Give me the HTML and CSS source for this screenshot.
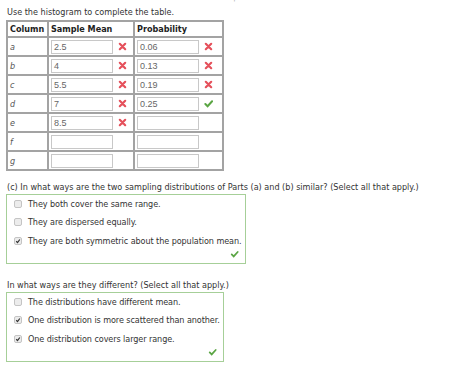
FILE: index.html
```html
<!DOCTYPE html>
<html>
  <head>
    <meta charset="UTF-8" />
    <title>Sampling distributions</title>
    <link rel="stylesheet" href="styles.css">
  </head>
  <body>
    <div class="cut"><span>Sample Mean</span></div>

    <p class="prompt">Use the histogram to complete the table.</p>
    <table class="grid">
      <tr>
        <th class="c1">Column</th>
        <th class="c2">Sample Mean</th>
        <th class="c3">Probability</th>
      </tr>
      <tr>
        <td class="letter">a</td>
        <td><span class="box">2.5</span><span class="mark bad"><svg viewBox="0 0 10 10"><path d="M2 2 L8 8 M8 2 L2 8"/></svg></span></td>
        <td><span class="box">0.06</span><span class="mark bad"><svg viewBox="0 0 10 10"><path d="M2 2 L8 8 M8 2 L2 8"/></svg></span></td>
      </tr>
      <tr>
        <td class="letter">b</td>
        <td><span class="box">4</span><span class="mark bad"><svg viewBox="0 0 10 10"><path d="M2 2 L8 8 M8 2 L2 8"/></svg></span></td>
        <td><span class="box">0.13</span><span class="mark bad"><svg viewBox="0 0 10 10"><path d="M2 2 L8 8 M8 2 L2 8"/></svg></span></td>
      </tr>
      <tr>
        <td class="letter">c</td>
        <td><span class="box">5.5</span><span class="mark bad"><svg viewBox="0 0 10 10"><path d="M2 2 L8 8 M8 2 L2 8"/></svg></span></td>
        <td><span class="box">0.19</span><span class="mark bad"><svg viewBox="0 0 10 10"><path d="M2 2 L8 8 M8 2 L2 8"/></svg></span></td>
      </tr>
      <tr>
        <td class="letter">d</td>
        <td><span class="box">7</span><span class="mark bad"><svg viewBox="0 0 10 10"><path d="M2 2 L8 8 M8 2 L2 8"/></svg></span></td>
        <td><span class="box">0.25</span><span class="mark good"><svg viewBox="0 0 10 10"><path d="M1.5 5.5 L4 8 L9 2.5"/></svg></span></td>
      </tr>
      <tr>
        <td class="letter">e</td>
        <td><span class="box">8.5</span><span class="mark bad"><svg viewBox="0 0 10 10"><path d="M2 2 L8 8 M8 2 L2 8"/></svg></span></td>
        <td><span class="box"></span></td>
      </tr>
      <tr>
        <td class="letter">f</td>
        <td><span class="box"></span></td>
        <td><span class="box"></span></td>
      </tr>
      <tr>
        <td class="letter">g</td>
        <td><span class="box"></span></td>
        <td><span class="box"></span></td>
      </tr>
    </table>

    <p class="prompt q">(c) In what ways are the two sampling distributions of Parts (a) and (b) similar? (Select all that apply.)</p>
    <div class="answer wide">
      <div class="opt"><span class="chk"></span>They both cover the same range.</div>
      <div class="opt"><span class="chk"></span>They are dispersed equally.</div>
      <div class="opt"><span class="chk on"><svg viewBox="0 0 10 10"><path d="M2 5.5 L4.2 7.5 L8 2.5"/></svg></span>They are both symmetric about the population mean.</div>
      <div class="ok"><svg viewBox="0 0 10 10"><path d="M1.5 5.5 L4 8 L9 2.5"/></svg></div>
    </div>

    <p class="prompt q2">In what ways are they different? (Select all that apply.)</p>
    <div class="answer narrow">
      <div class="opt"><span class="chk"></span>The distributions have different mean.</div>
      <div class="opt"><span class="chk on"><svg viewBox="0 0 10 10"><path d="M2 5.5 L4.2 7.5 L8 2.5"/></svg></span>One distribution is more scattered than another.</div>
      <div class="opt"><span class="chk on"><svg viewBox="0 0 10 10"><path d="M2 5.5 L4.2 7.5 L8 2.5"/></svg></span>One distribution covers larger range.</div>
      <div class="ok"><svg viewBox="0 0 10 10"><path d="M1.5 5.5 L4 8 L9 2.5"/></svg></div>
    </div>
  </body>
</html>
```

FILE: styles.css
```css
/* general */
* {
  box-sizing: border-box;
}

body {
  margin: 0;
  padding: 0 6px;
  font-family: "DejaVu Sans", Verdana, sans-serif;
  font-size: 8.1px;
  color: #333;
  background-color: #fff;
}

.cut {
  height: 4px;
  overflow: hidden;
  padding-left: 212px;
}

.cut span {
  display: block;
  margin-top: -6px;
  line-height: 9px;
  color: #aaa;
  font-size: 7px;
}

.prompt {
  margin: 0;
  height: 16px;
  line-height: 16px;
  padding-left: 1px;
}

/* table */
.grid {
  border-collapse: collapse;
  border: 2px solid #a3a3a3;
}

.grid th,
.grid td {
  border: 2px solid #a3a3a3;
  padding: 0 2px;
  text-align: left;
}

.grid th {
  height: 16px;
  font-weight: bold;
  color: #222;
}

.grid td {
  height: 19px;
}

.c1 {
  width: 41px;
}

.c2 {
  width: 86px;
}

.c3 {
  width: 89px;
}

.letter {
  font-style: italic;
  color: #555;
}

.box {
  display: inline-block;
  vertical-align: middle;
  width: 62px;
  height: 14px;
  line-height: 12px;
  padding-left: 2px;
  border: 1px solid #c8c8c8;
  font-family: "Liberation Sans", Arial, sans-serif;
  font-size: 9px;
  color: #666;
}

.mark {
  display: inline-block;
  vertical-align: middle;
  width: 9px;
  height: 9px;
  margin-left: 5px;
}

.mark svg,
.ok svg {
  display: block;
  width: 100%;
  height: 100%;
  fill: none;
  stroke-linecap: round;
}

.bad svg {
  stroke: #e5505b;
  stroke-width: 2.4;
}

.good svg,
.ok svg {
  stroke: #5aa543;
  stroke-width: 2.2;
}

/* answers */
.q {
  margin-top: 10px;
  height: 13px;
  line-height: 13px;
}

.q2 {
  margin-top: 15px;
  height: 13px;
  line-height: 13px;
}

.answer {
  border: 1px solid #a6cf98;
  padding: 0 0 0 7px;
  height: 70px;
}

.wide {
  width: 240px;
}

.narrow {
  width: 218px;
}

.opt {
  display: flex;
  align-items: center;
  height: 18.3px;
  white-space: nowrap;
  letter-spacing: -0.08px;
  color: #333;
}

.chk {
  display: inline-block;
  flex: none;
  width: 8px;
  height: 8px;
  margin-right: 6px;
  border: 1px solid #c4c4c4;
  border-radius: 2px;
  background-color: #ececec;
}

.chk.on svg {
  display: block;
  width: 100%;
  height: 100%;
  fill: none;
  stroke: #333;
  stroke-width: 2;
}

.ok {
  width: 9px;
  height: 8px;
  margin: 0 6px 0 auto;
}
```
